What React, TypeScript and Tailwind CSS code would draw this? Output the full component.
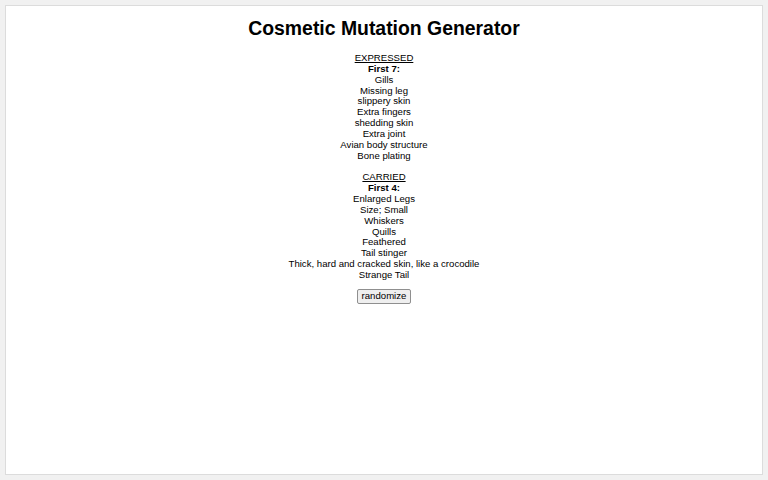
const expressed = [
  "Gills",
  "Missing leg",
  "slippery skin",
  "Extra fingers",
  "shedding skin",
  "Extra joint",
  "Avian body structure",
  "Bone plating",
];

const carried = [
  "Enlarged Legs",
  "Size; Small",
  "Whiskers",
  "Quills",
  "Feathered",
  "Tail stinger",
  "Thick, hard and cracked skin, like a crocodile",
  "Strange Tail",
];

function Section({ title, first, items }: { title: string; first: string; items: string[] }) {
  return (
    <div className="flex flex-col items-center">
      <span className="underline">{title}</span>
      <span className="font-bold">{first}</span>
      {items.map((item) => (
        <span key={item}>{item}</span>
      ))}
    </div>
  );
}

export default function App() {
  return (
    <div className="h-[480px] w-[768px] bg-[#f1f1f1] p-[5px] font-['Liberation_Sans',Arial,sans-serif] text-black">
      <div className="flex h-full flex-col items-center border border-[#dcdcdc] bg-white text-[9.6px] leading-[10.85px]">
        <h1 className="mt-[11px] text-[19.4px] leading-[22px] font-bold">Cosmetic Mutation Generator</h1>
        <div className="mt-[14px] flex flex-col items-center gap-[10.85px]">
          <Section title="EXPRESSED" first="First 7:" items={expressed} />
          <Section title="CARRIED" first="First 4:" items={carried} />
        </div>
        <button
          type="button"
          className="mt-[8px] rounded-[2px] border border-[#8f8f8f] bg-[#efefef] px-[4px] py-[1px] text-[9.6px] leading-[10.85px]"
        >
          randomize
        </button>
      </div>
    </div>
  );
}
